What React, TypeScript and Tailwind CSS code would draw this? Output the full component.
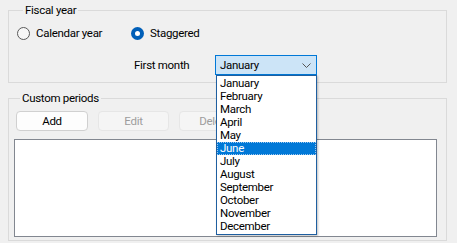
import React from "react"

const months = [
  "January", "February", "March", "April", "May", "June",
  "July", "August", "September", "October", "November", "December",
]

function Radio({ checked, label }: { checked?: boolean; label: string }) {
  return (
    <label className="flex items-center gap-[6px] h-[16px]">
      {checked ? (
        <span className="w-[13px] h-[13px] rounded-full bg-[#005fb8] flex items-center justify-center">
          <span className="w-[5px] h-[5px] rounded-full bg-white" />
        </span>
      ) : (
        <span className="w-[13px] h-[13px] rounded-full border border-[#5a5a5a] bg-[#f7f7f7]" />
      )}
      <span>{label}</span>
    </label>
  )
}

export default function App() {
  const selected = "June"
  return (
    <div
      className="relative w-[457px] h-[243px] overflow-hidden bg-[#f0f0f0] text-black text-[11.5px] leading-[13px] tracking-[-0.3px]"
      style={{ fontFamily: 'Roboto, "Liberation Sans", Arial, sans-serif' }}
    >
      <fieldset className="ml-[8px] mt-[3px] w-[439px] h-[80px] border border-[#dadada] px-[8px]">
        <legend className="ml-[6px] px-[2px] leading-[14px]">Fiscal year</legend>
        <div className="flex mt-[8px]">
          <div className="w-[114px]">
            <Radio label="Calendar year" />
          </div>
          <Radio checked label="Staggered" />
        </div>
        <div className="flex items-center mt-[14px] h-[20px]">
          <span className="ml-[117px] w-[81px]">First month</span>
          <div className="w-[102px] h-[20px] border border-[#0078d7] bg-[#cce4f7] flex items-center justify-between pl-[4px] pr-[5px]">
            <span>January</span>
            <svg width="9" height="5" viewBox="0 0 9 5" className="text-[#555]">
              <path d="M0.5 0.5 L4.5 4.5 L8.5 0.5" fill="none" stroke="currentColor" strokeWidth="1" />
            </svg>
          </div>
        </div>
      </fieldset>

      <fieldset className="ml-[8px] mt-[8px] w-[439px] h-[150px] border border-[#dadada] pl-[5px]">
        <legend className="ml-[6px] px-[2px] leading-[14px]">Custom periods</legend>
        <div className="flex gap-[10px] mt-[6px] ml-[2px]">
          <button className="w-[72px] h-[20px] rounded-[4px] border border-[#d0d0d0] bg-[#fdfdfd] text-black">
            Add
          </button>
          <button className="w-[71px] h-[20px] rounded-[4px] border border-[#e6e6e6] bg-[#f5f5f5] text-[#9d9d9d]">
            Edit
          </button>
          <button className="w-[71px] h-[20px] rounded-[4px] border border-[#e6e6e6] bg-[#f5f5f5] text-[#9d9d9d]">
            Delete
          </button>
        </div>
        <div className="mt-[8px] w-[423px] h-[98px] border border-[#828790] bg-white" />
      </fieldset>

      <ul className="absolute left-[216px] top-[75px] w-[101px] h-[160px] border border-[#1f5fa0] bg-white shadow-[1px_1px_2px_rgba(0,0,0,0.25)] pt-[1px]">
        {months.map((m) =>
          m === selected ? (
            <li
              key={m}
              className="h-[13px] leading-[11px] pl-[2px] bg-[#0078d7] text-white border border-dotted border-[#9fc8ee]"
            >
              {m}
            </li>
          ) : (
            <li key={m} className="h-[13px] pl-[3px]">
              {m}
            </li>
          )
        )}
      </ul>
    </div>
  )
}
